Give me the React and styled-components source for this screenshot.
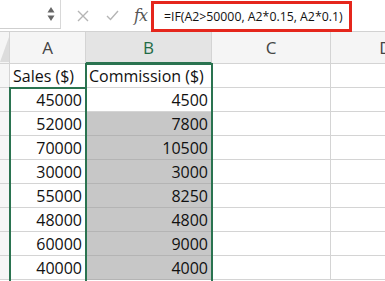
import React from "react";
import styled, { createGlobalStyle } from "styled-components";

const Global = createGlobalStyle`
  html, body { margin: 0; padding: 0; background: #fff; }
  body { width: 385px; height: 281px; overflow: hidden; font-family: "Open Sans", "Liberation Sans", sans-serif; }
`;

const Page = styled.div`
  width: 385px;
  height: 281px;
  overflow: hidden;
  position: relative;
  background: #fff;
`;

const Toolbar = styled.div`
  display: flex;
  height: 31px;
  border-bottom: 1px solid #d2d2d2;
  background: #fff;
`;

const NameBox = styled.div`
  width: 61px;
  height: 29px;
  border-right: 1px solid #d8d8d8;
  border-bottom: 1px solid #cfcfcf;
  display: flex;
  align-items: center;
  justify-content: flex-end;
  padding-right: 5px;
  box-sizing: border-box;
`;

const Controls = styled.div`
  width: 90px;
  display: flex;
  align-items: center;
  padding-left: 16px;
  box-sizing: border-box;
`;

const IconSlot = styled.span`
  display: flex;
  align-items: center;
  margin-right: ${(p) => p.$gap}px;
`;

const Fx = styled.span`
  font-family: "DejaVu Serif", "Liberation Serif", serif;
  font-style: italic;
  font-size: 16px;
  color: #555;
  letter-spacing: -1px;
`;

const FormulaBox = styled.div`
  width: 201px;
  height: 31px;
  margin-top: 1px;
  border: 3px solid #e5261c;
  box-sizing: border-box;
  background: #fff;
  display: flex;
  align-items: center;
  padding-left: 10px;
  font-size: 12.3px;
  color: #111;
  white-space: nowrap;
  position: relative;
  z-index: 2;
`;

const Grid = styled.div`
  display: grid;
  grid-template-columns: 10px 76px 126px 119px 110px;
  grid-template-rows: 32px repeat(9, 24px);
  position: relative;
`;

const Corner = styled.div`
  background: #f5f5f5;
  border-right: 1px solid #d4d4d4;
  border-bottom: 1px solid #d4d4d4;
  display: flex;
  align-items: flex-end;
  justify-content: flex-end;
  overflow: hidden;
`;

const ColHead = styled.div`
  background: ${(p) => (p.$active ? "#e4e4e4" : "#f5f5f5")};
  color: ${(p) => (p.$active ? "#1f6b45" : "#444")};
  border-right: 1px solid #d4d4d4;
  border-bottom: ${(p) => (p.$active ? "2px solid #2a7350" : "1px solid #d4d4d4")};
  display: flex;
  align-items: center;
  justify-content: center;
  font-size: 17px;
  box-sizing: border-box;
`;

const RowHead = styled.div`
  background: #f6f6f6;
  border-right: 1px solid #d4d4d4;
  border-bottom: 1px solid #d4d4d4;
`;

const Cell = styled.div`
  background: ${(p) => (p.$sel ? "#c7c7c7" : "#fff")};
  border-right: 1px solid ${(p) => (p.$sel ? "#b4b4b4" : "#d4d4d4")};
  border-bottom: 1px solid ${(p) => (p.$sel ? "#b4b4b4" : "#d4d4d4")};
  display: flex;
  align-items: center;
  justify-content: ${(p) => (p.$right ? "flex-end" : "flex-start")};
  padding: 0 ${(p) => (p.$right ? "3px" : "0")} 0 ${(p) => (p.$right ? "0" : "3px")};
  font-size: 16px;
  color: #111;
  white-space: nowrap;
  overflow: hidden;
  box-sizing: border-box;
`;

const Range = styled.div`
  position: absolute;
  border: 2px solid #2a7350;
  box-sizing: border-box;
  pointer-events: none;
`;

const data = [
  [45000, 4500],
  [52000, 7800],
  [70000, 10500],
  [30000, 3000],
  [55000, 8250],
  [48000, 4800],
  [60000, 9000],
  [40000, 4000],
];

const Spinner = () => (
  <svg width="8" height="16" viewBox="0 0 8 16">
    <path d="M4 1 L7.5 6.5 L0.5 6.5 Z" fill="#666" />
    <path d="M4 15 L7.5 9.5 L0.5 9.5 Z" fill="#666" />
  </svg>
);

const Cross = () => (
  <svg width="12" height="12" viewBox="0 0 12 12">
    <path d="M1 1 L11 11 M11 1 L1 11" stroke="#b5b5b5" strokeWidth="1.4" />
  </svg>
);

const Check = () => (
  <svg width="13" height="11" viewBox="0 0 13 11">
    <path d="M1 6 L4.5 9.5 L12 1" stroke="#b5b5b5" strokeWidth="1.4" fill="none" />
  </svg>
);

export default function App() {
  return (
    <Page>
      <Global />
      <Toolbar>
        <NameBox>
          <Spinner />
        </NameBox>
        <Controls>
          <IconSlot $gap={17}>
            <Cross />
          </IconSlot>
          <IconSlot $gap={15}>
            <Check />
          </IconSlot>
          <Fx>fx</Fx>
        </Controls>
        <FormulaBox>=IF(A2&gt;50000, A2*0.15, A2*0.1)</FormulaBox>
      </Toolbar>
      <Grid>
        <Corner>
          <svg width="9" height="28" viewBox="0 0 9 28">
            <path d="M9 2 L9 27 L0 27 Z" fill="#dcdcdc" />
          </svg>
        </Corner>
        <ColHead>A</ColHead>
        <ColHead $active>B</ColHead>
        <ColHead>C</ColHead>
        <ColHead>D</ColHead>

        <RowHead />
        <Cell>Sales ($)</Cell>
        <Cell>Commission ($)</Cell>
        <Cell />
        <Cell />

        {data.map(([a, b], i) => (
          <React.Fragment key={i}>
            <RowHead />
            <Cell $right>{a}</Cell>
            <Cell $right $sel={i > 0}>{b}</Cell>
            <Cell />
            <Cell />
          </React.Fragment>
        ))}
        <Range style={{ left: 85, top: 31, width: 128, height: 260 }} />
        <Range style={{ left: 9, top: 55, width: 78, height: 240 }} />
      </Grid>
    </Page>
  );
}
